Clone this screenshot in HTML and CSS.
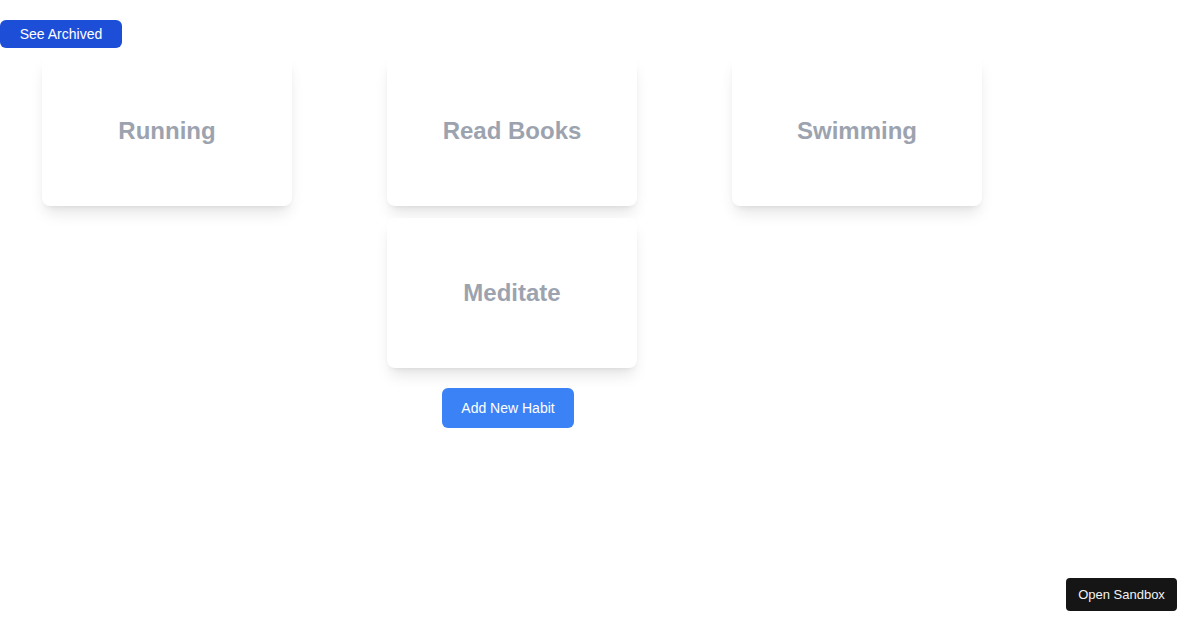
FILE: index.html
```html
<!DOCTYPE html>
<html>
<head>
<meta charset="utf-8">
<link rel="stylesheet" href="styles.css">
</head>
<body>
<div class="page">
  <div class="top">
    <button class="archived">See Archived</button>
  </div>
  <div class="grid">
    <div class="card"><span>Running</span></div>
    <div class="card"><span>Read Books</span></div>
    <div class="card"><span>Swimming</span></div>
    <div class="card col2"><span>Meditate</span></div>
  </div>
  <div class="actions">
    <button class="add">Add New Habit</button>
  </div>
</div>
<button class="sandbox">Open Sandbox</button>
</body>
</html>
```
FILE: styles.css
```css
* { box-sizing: border-box; }
html, body { margin: 0; padding: 0; background: #fff; }
body {
  font-family: "Liberation Sans", Arial, sans-serif;
  width: 1200px;
  height: 630px;
  overflow: hidden;
  position: relative;
}
.page { padding-top: 20px; }
.top { display: flex; }
.archived {
  border: 0;
  background: #1d4ed8;
  color: #fff;
  font-family: inherit;
  font-size: 14px;
  height: 28px;
  width: 122px;
  padding: 0;
  border-radius: 6px;
}
.grid {
  display: grid;
  grid-template-columns: repeat(3, 250px);
  column-gap: 95px;
  row-gap: 12px;
  margin-top: 8px;
  margin-left: 42px;
}
.card {
  height: 150px;
  background: #fff;
  border-radius: 8px;
  box-shadow: 0 10px 15px -3px rgba(0,0,0,0.1), 0 4px 6px -4px rgba(0,0,0,0.1);
  display: flex;
  align-items: center;
  justify-content: center;
}
.card span {
  font-size: 24px;
  font-weight: 700;
  color: #9ca3af;
}
.col2 { grid-column: 2; }
.actions {
  width: 1016px;
  display: flex;
  justify-content: center;
  margin-top: 20px;
}
.add {
  border: 0;
  background: #3b82f6;
  color: #fff;
  font-family: inherit;
  font-size: 14px;
  height: 40px;
  width: 132px;
  padding: 0;
  border-radius: 6px;
}
.sandbox {
  position: absolute;
  left: 1066px;
  top: 578px;
  width: 111px;
  height: 33px;
  border: 0;
  border-radius: 4px;
  background: #151515;
  color: #f2f2f2;
  font-family: inherit;
  font-size: 13px;
  padding: 0;
}
```
